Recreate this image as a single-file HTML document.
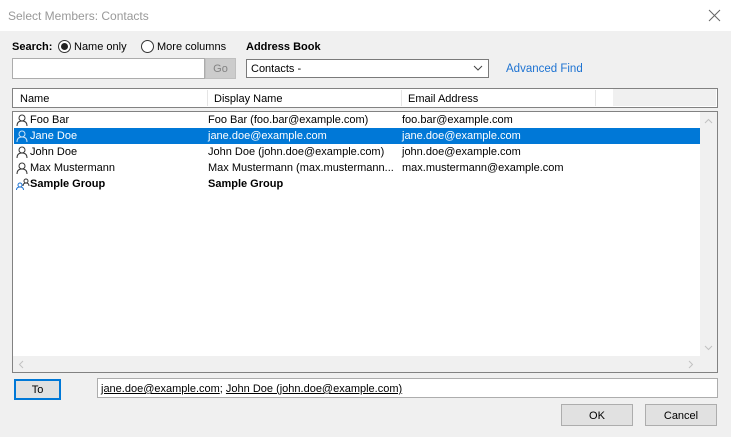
<!DOCTYPE html>
<html><head><meta charset="utf-8"><style>
*{margin:0;padding:0;box-sizing:border-box}
body{width:731px;height:437px;background:#f0f0f0;font-family:"Liberation Sans",sans-serif;font-size:11px;color:#000;position:relative;overflow:hidden}
.a{position:absolute;white-space:nowrap}
.b{font-weight:bold}
.radio{position:absolute;width:13px;height:13px;border:1px solid #333;border-radius:50%;background:#fff}
.radio.on::after{content:"";position:absolute;left:2px;top:2px;width:7px;height:7px;border-radius:50%;background:#222}
.row{position:absolute;left:14px;width:686px;height:16px}
.row span{position:absolute;top:2px}
.ic{position:absolute;left:2px;top:2px}
.btn{position:absolute;background:#e1e1e1;border:1px solid #adadad;text-align:center}
</style></head><body>
<div class="a" style="left:0;top:0;width:731px;height:31px;background:#fff"></div>
<div class="a" style="left:8px;top:9px;color:#999;font-size:12px">Select Members: Contacts</div>
<svg class="a" style="left:708px;top:9px" width="13" height="13"><path d="M1 1L12 12M12 1L1 12" stroke="#666" stroke-width="1"/></svg>

<div class="a b" style="left:12px;top:41px">Search:</div>
<div class="radio on" style="left:58px;top:40px"></div>
<div class="a" style="left:74px;top:41px">Name only</div>
<div class="radio" style="left:141px;top:40px"></div>
<div class="a" style="left:157px;top:41px">More columns</div>
<div class="a b" style="left:246px;top:41px">Address Book</div>

<div class="a" style="left:12px;top:58px;width:193px;height:21px;background:#fff;border:1px solid #acacac"></div>
<div class="btn" style="left:205px;top:58px;width:31px;height:21px;background:#ccc;border-color:#bfbfbf;color:#838383;line-height:20px">Go</div>
<div class="a" style="left:246px;top:59px;width:243px;height:19px;background:#fff;border:1px solid #7a7a7a;padding-left:4px;line-height:19px">Contacts -</div>
<svg class="a" style="left:473px;top:65px" width="10" height="7"><path d="M1 1L5 5L9 1" stroke="#444" fill="none"/></svg>
<div class="a" style="left:506px;top:63px;color:#1e73d2;font-size:11.5px">Advanced Find</div>

<div class="a" style="left:12px;top:88px;width:706px;height:20px;background:#fff;border:1px solid #828282"></div>
<div class="a" style="left:613px;top:89px;width:103px;height:17px;background:#f0f0f0"></div>
<div class="a" style="left:207px;top:90px;width:1px;height:16px;background:#e5e5e5"></div>
<div class="a" style="left:401px;top:90px;width:1px;height:16px;background:#e5e5e5"></div>
<div class="a" style="left:595px;top:90px;width:1px;height:16px;background:#e5e5e5"></div>
<div class="a" style="left:20px;top:93px">Name</div>
<div class="a" style="left:214px;top:93px">Display Name</div>
<div class="a" style="left:408px;top:93px">Email Address</div>

<div class="a" style="left:12px;top:111px;width:706px;height:262px;background:#fff;border:1px solid #828282"></div>
<div class="a" style="left:700px;top:112px;width:17px;height:244px;background:#f0f0f0"></div>
<div class="a" style="left:13px;top:356px;width:704px;height:16px;background:#f0f0f0"></div>
<svg class="a" style="left:704px;top:118px" width="9" height="6"><path d="M1 5L4.5 1.5L8 5" stroke="#c2c2c2" fill="none"/></svg>
<svg class="a" style="left:704px;top:345px" width="9" height="6"><path d="M1 1L4.5 4.5L8 1" stroke="#c2c2c2" fill="none"/></svg>
<svg class="a" style="left:18px;top:360px" width="6" height="9"><path d="M5 1L1.5 4.5L5 8" stroke="#c2c2c2" fill="none"/></svg>
<svg class="a" style="left:688px;top:360px" width="6" height="9"><path d="M1 1L4.5 4.5L1 8" stroke="#c2c2c2" fill="none"/></svg>

<div class="row" style="top:112px"><svg class="ic" width="12" height="12"><circle cx="6" cy="4" r="3" stroke="#333" fill="none"/><path d="M1 12Q1 7 6 7Q11 7 11 12" stroke="#333" fill="none"/></svg><span style="left:16px">Foo Bar</span><span style="left:194px">Foo Bar (foo.bar@example.com)</span><span style="left:388px">foo.bar@example.com</span></div>
<div class="row" style="top:128px;background:#0078d7;color:#fff"><svg class="ic" width="12" height="12"><circle cx="6" cy="4" r="3" stroke="#cfe4f7" fill="none"/><path d="M1 12Q1 7 6 7Q11 7 11 12" stroke="#cfe4f7" fill="none"/></svg><span style="left:16px">Jane Doe</span><span style="left:194px">jane.doe@example.com</span><span style="left:388px">jane.doe@example.com</span></div>
<div class="row" style="top:144px"><svg class="ic" width="12" height="12"><circle cx="6" cy="4" r="3" stroke="#333" fill="none"/><path d="M1 12Q1 7 6 7Q11 7 11 12" stroke="#333" fill="none"/></svg><span style="left:16px">John Doe</span><span style="left:194px">John Doe (john.doe@example.com)</span><span style="left:388px">john.doe@example.com</span></div>
<div class="row" style="top:160px"><svg class="ic" width="12" height="12"><circle cx="6" cy="4" r="3" stroke="#333" fill="none"/><path d="M1 12Q1 7 6 7Q11 7 11 12" stroke="#333" fill="none"/></svg><span style="left:16px">Max Mustermann</span><span style="left:194px">Max Mustermann (max.mustermann...</span><span style="left:388px">max.mustermann@example.com</span></div>
<div class="row b" style="top:176px"><svg class="ic" width="14" height="12"><circle cx="4" cy="7" r="2" stroke="#1e73d2" fill="none"/><path d="M0.5 12Q0.5 9 4 9Q7.5 9 7.5 12" stroke="#1e73d2" fill="none"/><circle cx="10" cy="3" r="2" stroke="#333" fill="none"/><path d="M7 8Q7 5 10 5Q13 5 13 8" stroke="#333" fill="none"/></svg><span style="left:16px">Sample Group</span><span style="left:194px">Sample Group</span></div>

<div class="btn" style="left:14px;top:379px;width:47px;height:21px;border:2px solid #0078d7;line-height:19px">To</div>
<div class="a" style="left:97px;top:378px;width:621px;height:20px;background:#fff;border:1px solid #adadad;padding-left:3px;line-height:20px"><u>jane.doe@example.com</u>; <u>John Doe (john.doe@example.com)</u></div>
<div class="btn" style="left:561px;top:404px;width:72px;height:22px;line-height:22px">OK</div>
<div class="btn" style="left:645px;top:404px;width:72px;height:22px;line-height:22px">Cancel</div>
</body></html>
